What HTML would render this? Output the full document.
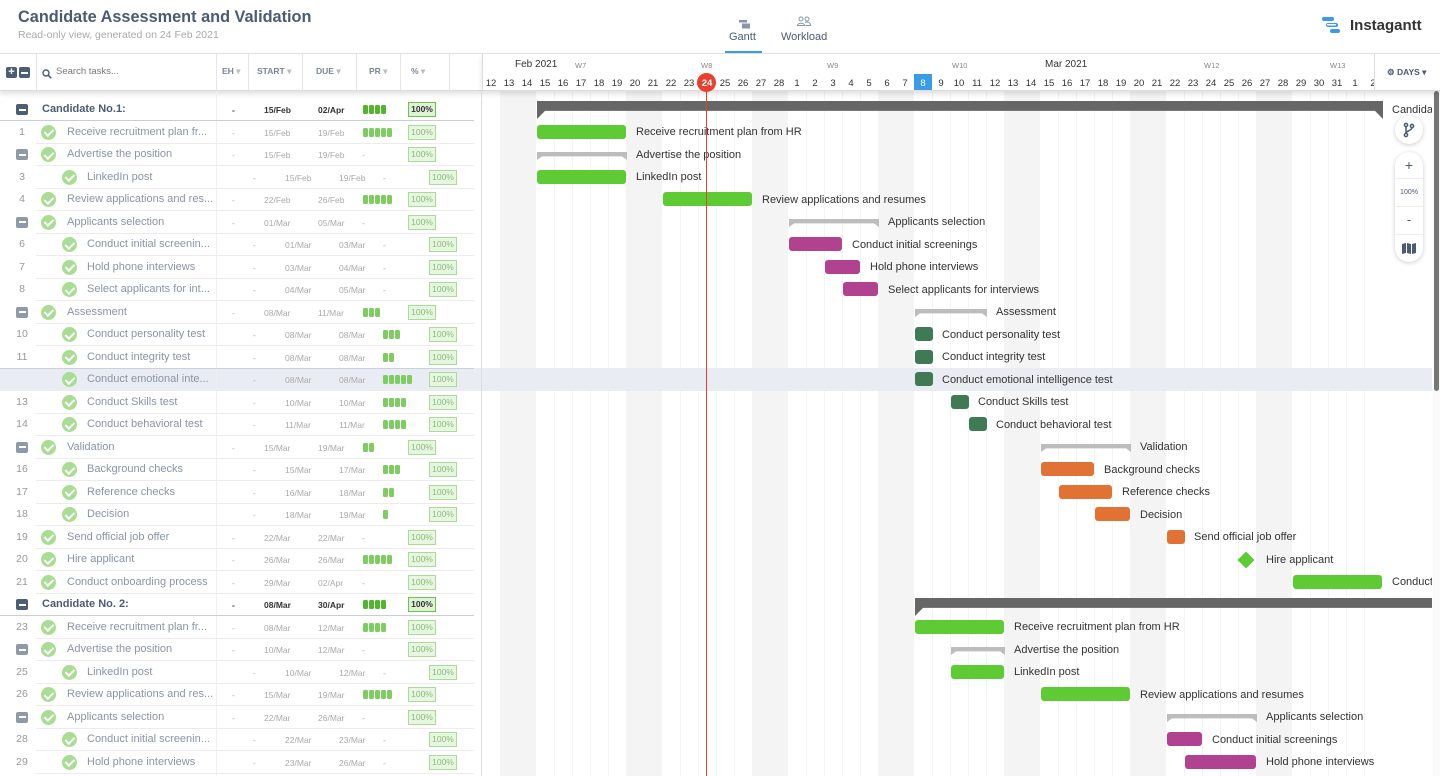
<!DOCTYPE html>
<html><head><meta charset="utf-8"><style>
*{box-sizing:border-box;margin:0;padding:0}
body{width:1440px;height:776px;overflow:hidden;position:relative;background:#fff;font-family:"Liberation Sans",sans-serif;color:#333}
.a{position:absolute}
.title{left:18px;top:8px;font-size:16.3px;font-weight:bold;color:#4b5b72}
.sub{left:18px;top:29px;font-size:10.5px;color:#aaa}
.tab{top:31px;font-size:11px;color:#4b5b72}
.hb{left:0;top:53px;width:1440px;height:1px;background:#e2e2e2}
.th{top:54px;height:37px;background:#fff;border-bottom:1px solid #ddd;box-shadow:0 3px 5px rgba(0,0,0,.12)}
.thc{top:66px;font-size:8.5px;font-weight:bold;color:#7a8797}
.vl{width:1px;background:#e6e6e6}
.r{position:absolute;left:0;width:482px;height:23px;font-size:11px}
.r .ln{position:absolute;left:36px;right:8px;bottom:0;height:1px;background:#ececec}
.r .n{position:absolute;left:8px;width:28px;text-align:center;top:5px;color:#999;font-size:10.5px}
.r .nm{position:absolute;top:5px;color:#8a95a6;white-space:nowrap}
.ck{position:absolute;top:4px;width:15px;height:15px;border-radius:50%;background:#a9dd94}
.ck:after{content:"";position:absolute;left:5px;top:2.5px;width:3.5px;height:7px;border:solid #fff;border-width:0 2px 2px 0;transform:rotate(45deg)}
.tg{position:absolute;left:16px;top:6px;width:12px;height:11px;border-radius:2px;background:#8e9aaa}
.tg:after{content:"";position:absolute;left:2.5px;top:4.5px;width:7px;height:2px;background:#fff}
.C .tg{background:#4c5d75}
.dd{position:absolute;top:7px;font-size:8.5px;color:#aaa}
.C .dd{color:#333;font-weight:bold}
.pr{position:absolute;top:7px;height:9px}
.pr i{display:inline-block;width:4.5px;height:9px;border-radius:1.5px;background:#7fcd62;margin-right:1.5px}
.C .pr i{background:#53b52e}
.pc{position:absolute;top:4px;width:28px;height:15px;border:1px solid #a9dc95;background:#e7f6e1;color:#8aba7a;font-size:8.5px;text-align:center;line-height:13px}
.C .pc{border-color:#6cc24c;color:#333;font-weight:bold;background:#dff2d6}
.C .nm{color:#4b5b72;font-weight:bold;left:42px}
.C .ln{left:0;height:1.5px;background:#c9ced6}
.bar{position:absolute;height:14px;border-radius:3px}
.g{background:#5ecb35}.pu{background:#b0428f}.dg{background:#3f7a55}.or{background:#e27234}
.br{position:absolute;height:8px;background:#bdbdbd;clip-path:polygon(0 0,100% 0,100% 100%,calc(100% - 5px) 55%,5px 55%,0 100%)}
.sm{position:absolute;height:18px;background:#666;clip-path:polygon(0 0,100% 0,100% 100%,calc(100% - 8px) 55%,8px 55%,0 100%)}
.lb{position:absolute;font-size:11px;color:#333;white-space:nowrap}
.day{position:absolute;top:78px;width:18px;text-align:center;font-size:9.5px;color:#333}
.wk{position:absolute;top:61px;font-size:7.5px;color:#888}
.we{position:absolute;top:91px;height:685px;width:36px;background:#f4f4f4}
.gl{position:absolute;top:91px;height:685px;width:1px;background:#f4f4f4}
</style></head><body>

<div class="we" style="left:500px"></div>
<div class="we" style="left:626px"></div>
<div class="we" style="left:752px"></div>
<div class="we" style="left:878px"></div>
<div class="we" style="left:1004px"></div>
<div class="we" style="left:1130px"></div>
<div class="we" style="left:1256px"></div>
<div class="we" style="left:1382px;width:50px;background:#fff"></div>
<div class="gl" style="left:554px"></div><div class="gl" style="left:572px"></div><div class="gl" style="left:590px"></div><div class="gl" style="left:608px"></div>
<div class="gl" style="left:680px"></div><div class="gl" style="left:698px"></div><div class="gl" style="left:716px"></div><div class="gl" style="left:734px"></div>
<div class="gl" style="left:806px"></div><div class="gl" style="left:824px"></div><div class="gl" style="left:842px"></div><div class="gl" style="left:860px"></div>
<div class="gl" style="left:932px"></div><div class="gl" style="left:950px"></div><div class="gl" style="left:968px"></div><div class="gl" style="left:986px"></div>
<div class="gl" style="left:1058px"></div><div class="gl" style="left:1076px"></div><div class="gl" style="left:1094px"></div><div class="gl" style="left:1112px"></div>
<div class="gl" style="left:1184px"></div><div class="gl" style="left:1202px"></div><div class="gl" style="left:1220px"></div><div class="gl" style="left:1238px"></div>
<div class="gl" style="left:1310px"></div><div class="gl" style="left:1328px"></div><div class="gl" style="left:1346px"></div><div class="gl" style="left:1364px"></div>

<div class="a" style="left:0;top:368px;width:1432px;height:23px;background:#e9edf3"></div>
<div class="a" style="left:1433px;top:91px;width:7px;height:685px;background:#fafafa"></div>
<div class="a" style="left:1434px;top:91px;width:5px;height:300px;background:#777;border-radius:3px"></div>

<div class="sm" style="left:537px;top:101px;width:846px"></div><div class="lb" style="left:1392px;top:104px;width:40px;overflow:hidden">Candidate No.1:</div>
<div class="bar g" style="left:537px;top:125px;width:89px"></div><div class="lb" style="left:636px;top:126px">Receive recruitment plan from HR</div>
<div class="br" style="left:537px;top:152px;width:90px"></div><div class="lb" style="left:636px;top:149px">Advertise the position</div>
<div class="bar g" style="left:537px;top:170px;width:89px"></div><div class="lb" style="left:636px;top:171px">LinkedIn post</div>
<div class="bar g" style="left:663px;top:192px;width:89px"></div><div class="lb" style="left:762px;top:194px">Review applications and resumes</div>
<div class="br" style="left:789px;top:219px;width:90px"></div><div class="lb" style="left:888px;top:216px">Applicants selection</div>
<div class="bar pu" style="left:789px;top:237px;width:53px"></div><div class="lb" style="left:852px;top:239px">Conduct initial screenings</div>
<div class="bar pu" style="left:825px;top:260px;width:35px"></div><div class="lb" style="left:870px;top:261px">Hold phone interviews</div>
<div class="bar pu" style="left:843px;top:282px;width:35px"></div><div class="lb" style="left:888px;top:284px">Select applicants for interviews</div>
<div class="br" style="left:915px;top:309px;width:72px"></div><div class="lb" style="left:996px;top:306px">Assessment</div>
<div class="bar dg" style="left:915px;top:327px;width:18px"></div><div class="lb" style="left:942px;top:329px">Conduct personality test</div>
<div class="bar dg" style="left:915px;top:350px;width:18px"></div><div class="lb" style="left:942px;top:351px">Conduct integrity test</div>
<div class="bar dg" style="left:915px;top:372px;width:18px"></div><div class="lb" style="left:942px;top:374px">Conduct emotional intelligence test</div>
<div class="bar dg" style="left:951px;top:395px;width:18px"></div><div class="lb" style="left:978px;top:396px">Conduct Skills test</div>
<div class="bar dg" style="left:969px;top:417px;width:18px"></div><div class="lb" style="left:996px;top:419px">Conduct behavioral test</div>
<div class="br" style="left:1041px;top:444px;width:90px"></div><div class="lb" style="left:1140px;top:441px">Validation</div>
<div class="bar or" style="left:1041px;top:462px;width:53px"></div><div class="lb" style="left:1104px;top:464px">Background checks</div>
<div class="bar or" style="left:1059px;top:485px;width:53px"></div><div class="lb" style="left:1122px;top:486px">Reference checks</div>
<div class="bar or" style="left:1095px;top:507px;width:35px"></div><div class="lb" style="left:1140px;top:509px">Decision</div>
<div class="bar or" style="left:1167px;top:530px;width:18px"></div><div class="lb" style="left:1194px;top:531px">Send official job offer</div>
<div class="a" style="left:1240px;top:554px;width:12px;height:12px;background:#5ecb35;transform:rotate(45deg)"></div><div class="lb" style="left:1266px;top:554px">Hire applicant</div>
<div class="bar g" style="left:1293px;top:575px;width:89px"></div>
<div class="a" style="left:1392px;top:576px;width:40px;overflow:hidden;font-size:11px;white-space:nowrap">Conduct onboarding process</div>
<div class="a" style="left:915px;top:598px;width:517px;height:18px;background:#666;clip-path:polygon(0 0,100% 0,100% 55%,8px 55%,0 100%)"></div>
<div class="bar g" style="left:915px;top:620px;width:89px"></div><div class="lb" style="left:1014px;top:621px">Receive recruitment plan from HR</div>
<div class="br" style="left:951px;top:647px;width:54px"></div><div class="lb" style="left:1014px;top:644px">Advertise the position</div>
<div class="bar g" style="left:951px;top:665px;width:53px"></div><div class="lb" style="left:1014px;top:666px">LinkedIn post</div>
<div class="bar g" style="left:1041px;top:687px;width:89px"></div><div class="lb" style="left:1140px;top:689px">Review applications and resumes</div>
<div class="br" style="left:1167px;top:714px;width:90px"></div><div class="lb" style="left:1266px;top:711px">Applicants selection</div>
<div class="bar pu" style="left:1167px;top:732px;width:35px"></div><div class="lb" style="left:1212px;top:734px">Conduct initial screenings</div>
<div class="bar pu" style="left:1185px;top:755px;width:71px"></div><div class="lb" style="left:1266px;top:756px">Hold phone interviews</div>

<div class="a" style="left:706px;top:80px;width:1px;height:696px;background:#e8402f"></div>

<div class="a" style="left:1395px;top:116px;width:28px;height:28px;border-radius:50%;background:#fff;box-shadow:0 1px 5px rgba(0,0,0,.2)">
<svg width="28" height="28" viewBox="0 0 28 28"><g fill="none" stroke="#4b5b72" stroke-width="1.5"><circle cx="11" cy="9" r="1.6"/><circle cx="11" cy="19" r="1.6"/><circle cx="17" cy="10" r="1.6"/><path d="M11 10.6v6.8M17 11.6c0 3-6 3-6 6"/></g></svg></div>
<div class="a" style="left:1395px;top:152px;width:28px;height:110px;border-radius:14px;background:#fff;box-shadow:0 1px 5px rgba(0,0,0,.2);font-size:10px;color:#4b5b72;text-align:center">
<div style="height:27px;line-height:27px;font-size:14px;border-bottom:1px solid #eee">+</div>
<div style="height:28px;line-height:28px;font-size:7px;border-bottom:1px solid #eee">100%</div>
<div style="height:28px;line-height:26px;font-size:13px;border-bottom:1px solid #eee">-</div>
<div style="height:27px;padding-top:8px"><svg width="14" height="11" viewBox="0 0 14 11"><path d="M0 1l4-1v10l-4 1zM5 0l4 1v10l-4-1zM10 1l4-1v10l-4 1z" fill="#4b5b72"/></svg></div>
</div>

<div class="a title">Candidate Assessment and Validation</div>
<div class="a sub">Read-only view, generated on 24 Feb 2021</div>
<div class="a" style="left:739px;top:16px;width:11px;height:9px"><svg width="11" height="9"><rect x="0" y="0" width="8" height="2.5" fill="#8896a8"/><rect x="3" y="3.5" width="8" height="5" fill="#8896a8"/></svg></div>
<div class="a tab" style="left:729px">Gantt</div>
<div class="a" style="left:725px;top:51px;width:37px;height:3px;background:#3a9be6"></div>
<div class="a" style="left:797px;top:13px"><svg width="14" height="10" viewBox="0 0 14 10"><g fill="none" stroke="#8896a8" stroke-width="1"><circle cx="4" cy="3" r="2"/><path d="M0.5 9.5c0-3 7-3 7 0z"/><circle cx="10" cy="3" r="2"/><path d="M8 6.5c2-1 5.5-.5 5.5 3h-5"/></g></svg></div>
<div class="a tab" style="left:781px">Workload</div>
<div class="hb a"></div>
<div class="a" style="left:1322px;top:17px"><svg width="20" height="18" viewBox="0 0 20 18"><rect x="0" y="0" width="12" height="4" rx="2" fill="#3a9be6"/><rect x="4" y="6" width="12" height="4" rx="2" fill="#3a9be6"/><rect x="8" y="12" width="10" height="4" rx="2" fill="#3a9be6"/><rect x="5" y="7" width="9" height="1.5" fill="#fff"/></svg></div>
<div class="a" style="left:1350px;top:17px;font-size:15px;font-weight:bold;color:#333">Instagantt</div>

<div class="a th" style="left:0;width:482px"></div>
<div class="a" style="left:6px;top:67px;width:11px;height:11px;background:#4c5d75;border-radius:2px;color:#fff;font-size:11px;line-height:10px;text-align:center;font-weight:bold">+</div>
<div class="a" style="left:19px;top:67px;width:11px;height:11px;background:#4c5d75;border-radius:2px"><div style="margin:4.5px 2px;height:2px;background:#fff"></div></div>
<div class="a vl" style="left:36px;top:54px;height:36px"></div>
<div class="a" style="left:42px;top:66px"><svg width="10" height="10"><circle cx="4" cy="4" r="3" fill="none" stroke="#4b5b72" stroke-width="1.4"/><path d="M6.2 6.2l3 3" stroke="#4b5b72" stroke-width="1.5"/></svg></div>
<div class="a" style="left:56px;top:66px;font-size:9.5px;color:#777">Search tasks...</div>
<div class="a vl" style="left:216px;top:54px;height:36px"></div>
<div class="a vl" style="left:248px;top:54px;height:36px"></div>
<div class="a vl" style="left:302px;top:54px;height:36px"></div>
<div class="a vl" style="left:356px;top:54px;height:36px"></div>
<div class="a vl" style="left:400px;top:54px;height:36px"></div>
<div class="a vl" style="left:449px;top:54px;height:36px"></div>
<div class="a thc" style="left:222px">EH <span style="color:#bbb">▾</span></div>
<div class="a thc" style="left:257px">START <span style="color:#bbb">▾</span></div>
<div class="a thc" style="left:316px">DUE <span style="color:#bbb">▾</span></div>
<div class="a thc" style="left:369px">PR <span style="color:#bbb">▾</span></div>
<div class="a thc" style="left:411px">% <span style="color:#bbb">▾</span></div>

<div class="a th" style="left:482px;width:958px;border-left:1px solid #ddd"></div>
<div class="a" style="left:515px;top:59px;font-size:10px;color:#333">Feb 2021</div>
<div class="a" style="left:1045px;top:59px;font-size:10px;color:#333">Mar 2021</div>
<div class="wk" style="left:575px">W7</div><div class="wk" style="left:701px">W8</div><div class="wk" style="left:827px">W9</div><div class="wk" style="left:952px">W10</div><div class="wk" style="left:1204px">W12</div><div class="wk" style="left:1330px">W13</div>
<div class="a" style="left:914px;top:74px;width:18px;height:16px;background:#3a9be6"></div>
<div class="a" style="left:697px;top:73px;width:19px;height:19px;border-radius:50%;background:#e8402f"></div>
<div class="day" style="left:482px">12</div><div class="day" style="left:500px">13</div><div class="day" style="left:518px">14</div><div class="day" style="left:536px">15</div><div class="day" style="left:554px">16</div><div class="day" style="left:572px">17</div><div class="day" style="left:590px">18</div><div class="day" style="left:608px">19</div><div class="day" style="left:626px">20</div><div class="day" style="left:644px">21</div><div class="day" style="left:662px">22</div><div class="day" style="left:680px">23</div><div class="day" style="left:698px;color:#fff;font-weight:bold">24</div><div class="day" style="left:716px">25</div><div class="day" style="left:734px">26</div><div class="day" style="left:752px">27</div><div class="day" style="left:770px">28</div>
<div class="day" style="left:788px">1</div><div class="day" style="left:806px">2</div><div class="day" style="left:824px">3</div><div class="day" style="left:842px">4</div><div class="day" style="left:860px">5</div><div class="day" style="left:878px">6</div><div class="day" style="left:896px">7</div><div class="day" style="left:914px;color:#fff">8</div><div class="day" style="left:932px">9</div><div class="day" style="left:950px">10</div><div class="day" style="left:968px">11</div><div class="day" style="left:986px">12</div><div class="day" style="left:1004px">13</div><div class="day" style="left:1022px">14</div><div class="day" style="left:1040px">15</div><div class="day" style="left:1058px">16</div><div class="day" style="left:1076px">17</div><div class="day" style="left:1094px">18</div><div class="day" style="left:1112px">19</div><div class="day" style="left:1130px">20</div><div class="day" style="left:1148px">21</div><div class="day" style="left:1166px">22</div><div class="day" style="left:1184px">23</div><div class="day" style="left:1202px">24</div><div class="day" style="left:1220px">25</div><div class="day" style="left:1238px">26</div><div class="day" style="left:1256px">27</div><div class="day" style="left:1274px">28</div><div class="day" style="left:1292px">29</div><div class="day" style="left:1310px">30</div><div class="day" style="left:1328px">31</div><div class="day" style="left:1346px">1</div><div class="day" style="left:1364px">2</div>
<div class="a" style="left:1374px;top:54px;width:66px;height:36px;background:#fff;border-left:1px solid #ddd;font-size:8.5px;font-weight:bold;color:#4b5b72;line-height:36px;padding-left:12px">⚙ DAYS ▾</div>

<div class="a" style="left:0;top:91px;width:482px;height:685px;border-right:1px solid #ddd">
<div class="a vl" style="left:216px;top:0;height:685px;background:#f0f0f0"></div>
</div>

<div class="r C" style="top:98px"><span class="tg"></span><span class="nm">Candidate No.1:</span><span class="dd" style="left:232px">-</span><span class="dd" style="left:264px">15/Feb</span><span class="dd" style="left:318px">02/Apr</span><span class="pr" style="left:363px"><i></i><i></i><i></i><i></i></span><span class="pc" style="left:408px">100%</span><span class="ln"></span></div>
<div class="r" style="top:120.5px"><span class="n">1</span><span class="ck" style="left:41px"></span><span class="nm" style="left:67px">Receive recruitment plan fr...</span><span class="dd" style="left:232px">-</span><span class="dd" style="left:264px">15/Feb</span><span class="dd" style="left:318px">19/Feb</span><span class="pr" style="left:363px"><i></i><i></i><i></i><i></i><i></i></span><span class="pc" style="left:408px">100%</span><span class="ln"></span></div>
<div class="r" style="top:143px"><span class="tg"></span><span class="ck" style="left:41px"></span><span class="nm" style="left:67px">Advertise the position</span><span class="dd" style="left:232px">-</span><span class="dd" style="left:264px">15/Feb</span><span class="dd" style="left:318px">19/Feb</span><span class="dd" style="left:362px">-</span><span class="pc" style="left:408px">100%</span><span class="ln"></span></div>
<div class="r" style="top:165.5px"><span class="n">3</span><span class="ck" style="left:62px"></span><span class="nm" style="left:87px">LinkedIn post</span><span class="dd" style="left:253px">-</span><span class="dd" style="left:285px">15/Feb</span><span class="dd" style="left:339px">19/Feb</span><span class="dd" style="left:383px">-</span><span class="pc" style="left:429px">100%</span><span class="ln"></span></div>
<div class="r" style="top:188px"><span class="n">4</span><span class="ck" style="left:41px"></span><span class="nm" style="left:67px">Review applications and res...</span><span class="dd" style="left:232px">-</span><span class="dd" style="left:264px">22/Feb</span><span class="dd" style="left:318px">26/Feb</span><span class="pr" style="left:363px"><i></i><i></i><i></i><i></i><i></i></span><span class="pc" style="left:408px">100%</span><span class="ln"></span></div>
<div class="r" style="top:210.5px"><span class="tg"></span><span class="ck" style="left:41px"></span><span class="nm" style="left:67px">Applicants selection</span><span class="dd" style="left:232px">-</span><span class="dd" style="left:264px">01/Mar</span><span class="dd" style="left:318px">05/Mar</span><span class="dd" style="left:362px">-</span><span class="pc" style="left:408px">100%</span><span class="ln"></span></div>
<div class="r" style="top:233px"><span class="n">6</span><span class="ck" style="left:62px"></span><span class="nm" style="left:87px">Conduct initial screenin...</span><span class="dd" style="left:253px">-</span><span class="dd" style="left:285px">01/Mar</span><span class="dd" style="left:339px">03/Mar</span><span class="dd" style="left:383px">-</span><span class="pc" style="left:429px">100%</span><span class="ln"></span></div>
<div class="r" style="top:255.5px"><span class="n">7</span><span class="ck" style="left:62px"></span><span class="nm" style="left:87px">Hold phone interviews</span><span class="dd" style="left:253px">-</span><span class="dd" style="left:285px">03/Mar</span><span class="dd" style="left:339px">04/Mar</span><span class="dd" style="left:383px">-</span><span class="pc" style="left:429px">100%</span><span class="ln"></span></div>
<div class="r" style="top:278px"><span class="n">8</span><span class="ck" style="left:62px"></span><span class="nm" style="left:87px">Select applicants for int...</span><span class="dd" style="left:253px">-</span><span class="dd" style="left:285px">04/Mar</span><span class="dd" style="left:339px">05/Mar</span><span class="dd" style="left:383px">-</span><span class="pc" style="left:429px">100%</span><span class="ln"></span></div>
<div class="r" style="top:300.5px"><span class="tg"></span><span class="ck" style="left:41px"></span><span class="nm" style="left:67px">Assessment</span><span class="dd" style="left:232px">-</span><span class="dd" style="left:264px">08/Mar</span><span class="dd" style="left:318px">11/Mar</span><span class="pr" style="left:363px"><i></i><i></i><i></i></span><span class="pc" style="left:408px">100%</span><span class="ln"></span></div>
<div class="r" style="top:323px"><span class="n">10</span><span class="ck" style="left:62px"></span><span class="nm" style="left:87px">Conduct personality test</span><span class="dd" style="left:253px">-</span><span class="dd" style="left:285px">08/Mar</span><span class="dd" style="left:339px">08/Mar</span><span class="pr" style="left:383px"><i></i><i></i><i></i></span><span class="pc" style="left:429px">100%</span><span class="ln"></span></div>
<div class="r" style="top:345.5px"><span class="n">11</span><span class="ck" style="left:62px"></span><span class="nm" style="left:87px">Conduct integrity test</span><span class="dd" style="left:253px">-</span><span class="dd" style="left:285px">08/Mar</span><span class="dd" style="left:339px">08/Mar</span><span class="pr" style="left:383px"><i></i><i></i></span><span class="pc" style="left:429px">100%</span><span class="ln" style="left:0;background:#c9d1dc"></span></div>
<div class="r" style="top:368px"><span class="ck" style="left:62px"></span><span class="nm" style="left:87px">Conduct emotional inte...</span><span class="dd" style="left:253px">-</span><span class="dd" style="left:285px">08/Mar</span><span class="dd" style="left:339px">08/Mar</span><span class="pr" style="left:383px"><i></i><i></i><i></i><i></i><i></i></span><span class="pc" style="left:429px">100%</span><span class="ln"></span></div>
<div class="r" style="top:390.5px"><span class="n">13</span><span class="ck" style="left:62px"></span><span class="nm" style="left:87px">Conduct Skills test</span><span class="dd" style="left:253px">-</span><span class="dd" style="left:285px">10/Mar</span><span class="dd" style="left:339px">10/Mar</span><span class="pr" style="left:383px"><i></i><i></i><i></i><i></i></span><span class="pc" style="left:429px">100%</span><span class="ln"></span></div>
<div class="r" style="top:413px"><span class="n">14</span><span class="ck" style="left:62px"></span><span class="nm" style="left:87px">Conduct behavioral test</span><span class="dd" style="left:253px">-</span><span class="dd" style="left:285px">11/Mar</span><span class="dd" style="left:339px">11/Mar</span><span class="pr" style="left:383px"><i></i><i></i><i></i><i></i></span><span class="pc" style="left:429px">100%</span><span class="ln"></span></div>
<div class="r" style="top:435.5px"><span class="tg"></span><span class="ck" style="left:41px"></span><span class="nm" style="left:67px">Validation</span><span class="dd" style="left:232px">-</span><span class="dd" style="left:264px">15/Mar</span><span class="dd" style="left:318px">19/Mar</span><span class="pr" style="left:363px"><i></i><i></i></span><span class="pc" style="left:408px">100%</span><span class="ln"></span></div>
<div class="r" style="top:458px"><span class="n">16</span><span class="ck" style="left:62px"></span><span class="nm" style="left:87px">Background checks</span><span class="dd" style="left:253px">-</span><span class="dd" style="left:285px">15/Mar</span><span class="dd" style="left:339px">17/Mar</span><span class="pr" style="left:383px"><i></i><i></i><i></i></span><span class="pc" style="left:429px">100%</span><span class="ln"></span></div>
<div class="r" style="top:480.5px"><span class="n">17</span><span class="ck" style="left:62px"></span><span class="nm" style="left:87px">Reference checks</span><span class="dd" style="left:253px">-</span><span class="dd" style="left:285px">16/Mar</span><span class="dd" style="left:339px">18/Mar</span><span class="pr" style="left:383px"><i></i><i></i></span><span class="pc" style="left:429px">100%</span><span class="ln"></span></div>
<div class="r" style="top:503px"><span class="n">18</span><span class="ck" style="left:62px"></span><span class="nm" style="left:87px">Decision</span><span class="dd" style="left:253px">-</span><span class="dd" style="left:285px">18/Mar</span><span class="dd" style="left:339px">19/Mar</span><span class="pr" style="left:383px"><i></i></span><span class="pc" style="left:429px">100%</span><span class="ln"></span></div>
<div class="r" style="top:525.5px"><span class="n">19</span><span class="ck" style="left:41px"></span><span class="nm" style="left:67px">Send official job offer</span><span class="dd" style="left:232px">-</span><span class="dd" style="left:264px">22/Mar</span><span class="dd" style="left:318px">22/Mar</span><span class="dd" style="left:362px">-</span><span class="pc" style="left:408px">100%</span><span class="ln"></span></div>
<div class="r" style="top:548px"><span class="n">20</span><span class="ck" style="left:41px"></span><span class="nm" style="left:67px">Hire applicant</span><span class="dd" style="left:232px">-</span><span class="dd" style="left:264px">26/Mar</span><span class="dd" style="left:318px">26/Mar</span><span class="pr" style="left:363px"><i></i><i></i><i></i><i></i><i></i></span><span class="pc" style="left:408px">100%</span><span class="ln"></span></div>
<div class="r" style="top:570.5px"><span class="n">21</span><span class="ck" style="left:41px"></span><span class="nm" style="left:67px">Conduct onboarding process</span><span class="dd" style="left:232px">-</span><span class="dd" style="left:264px">29/Mar</span><span class="dd" style="left:318px">02/Apr</span><span class="dd" style="left:362px">-</span><span class="pc" style="left:408px">100%</span><span class="ln"></span></div>
<div class="r C" style="top:593px"><span class="tg"></span><span class="nm">Candidate No. 2:</span><span class="dd" style="left:232px">-</span><span class="dd" style="left:264px">08/Mar</span><span class="dd" style="left:318px">30/Apr</span><span class="pr" style="left:363px"><i></i><i></i><i></i><i></i></span><span class="pc" style="left:408px">100%</span><span class="ln"></span></div>
<div class="r" style="top:615.5px"><span class="n">23</span><span class="ck" style="left:41px"></span><span class="nm" style="left:67px">Receive recruitment plan fr...</span><span class="dd" style="left:232px">-</span><span class="dd" style="left:264px">08/Mar</span><span class="dd" style="left:318px">12/Mar</span><span class="pr" style="left:363px"><i></i><i></i><i></i><i></i></span><span class="pc" style="left:408px">100%</span><span class="ln"></span></div>
<div class="r" style="top:638px"><span class="tg"></span><span class="ck" style="left:41px"></span><span class="nm" style="left:67px">Advertise the position</span><span class="dd" style="left:232px">-</span><span class="dd" style="left:264px">10/Mar</span><span class="dd" style="left:318px">12/Mar</span><span class="dd" style="left:362px">-</span><span class="pc" style="left:408px">100%</span><span class="ln"></span></div>
<div class="r" style="top:660.5px"><span class="n">25</span><span class="ck" style="left:62px"></span><span class="nm" style="left:87px">LinkedIn post</span><span class="dd" style="left:253px">-</span><span class="dd" style="left:285px">10/Mar</span><span class="dd" style="left:339px">12/Mar</span><span class="dd" style="left:383px">-</span><span class="pc" style="left:429px">100%</span><span class="ln"></span></div>
<div class="r" style="top:683px"><span class="n">26</span><span class="ck" style="left:41px"></span><span class="nm" style="left:67px">Review applications and res...</span><span class="dd" style="left:232px">-</span><span class="dd" style="left:264px">15/Mar</span><span class="dd" style="left:318px">19/Mar</span><span class="pr" style="left:363px"><i></i><i></i><i></i><i></i><i></i></span><span class="pc" style="left:408px">100%</span><span class="ln"></span></div>
<div class="r" style="top:705.5px"><span class="tg"></span><span class="ck" style="left:41px"></span><span class="nm" style="left:67px">Applicants selection</span><span class="dd" style="left:232px">-</span><span class="dd" style="left:264px">22/Mar</span><span class="dd" style="left:318px">26/Mar</span><span class="dd" style="left:362px">-</span><span class="pc" style="left:408px">100%</span><span class="ln"></span></div>
<div class="r" style="top:728px"><span class="n">28</span><span class="ck" style="left:62px"></span><span class="nm" style="left:87px">Conduct initial screenin...</span><span class="dd" style="left:253px">-</span><span class="dd" style="left:285px">22/Mar</span><span class="dd" style="left:339px">23/Mar</span><span class="dd" style="left:383px">-</span><span class="pc" style="left:429px">100%</span><span class="ln"></span></div>
<div class="r" style="top:750.5px"><span class="n">29</span><span class="ck" style="left:62px"></span><span class="nm" style="left:87px">Hold phone interviews</span><span class="dd" style="left:253px">-</span><span class="dd" style="left:285px">23/Mar</span><span class="dd" style="left:339px">26/Mar</span><span class="dd" style="left:383px">-</span><span class="pc" style="left:429px">100%</span><span class="ln"></span></div>
</body></html>
